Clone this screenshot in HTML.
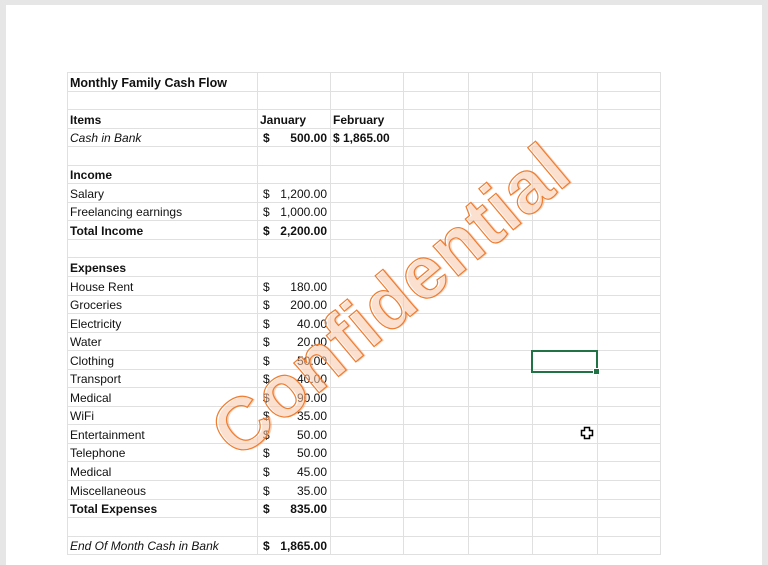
<!DOCTYPE html>
<html><head><meta charset="utf-8"><style>
html,body{margin:0;padding:0;}
body{width:768px;height:556px;background:#e6e6e6;position:relative;overflow:hidden;font-family:"Liberation Sans",Arial,sans-serif;}
.page{position:absolute;left:6px;top:5px;width:756px;height:560px;background:#fff;}
table{position:absolute;left:67px;top:72px;border-collapse:collapse;table-layout:fixed;font-size:12px;color:#111;}
td{border:1px solid #e0e0e0;height:16.55px;padding:1px 2px 0 2px;white-space:nowrap;overflow:hidden;line-height:16px;vertical-align:bottom;}
.b{font-weight:bold}.i{font-style:italic}
.d span{float:left;}
.d{text-align:right;padding-right:3px;padding-left:5px;}
.sel{position:absolute;left:531px;top:350px;width:63px;height:19px;border:2px solid #217346;}
.sel:after{content:"";position:absolute;right:-4px;bottom:-4px;width:5px;height:5px;background:#217346;border:1px solid #fff;}
.wm{position:absolute;left:390px;top:300px;transform:translate(-50%,-50%) rotate(-40deg);font-size:74px;font-weight:bold;color:rgba(255,255,255,0.3);-webkit-text-stroke:1.2px #ee7d31;white-space:nowrap;letter-spacing:1px;text-shadow:1.5px 1.5px 0 rgba(240,130,60,0.35);}
.cur{position:absolute;left:580px;top:426px;}
</style></head><body>
<div class="page"></div>
<table>
<colgroup><col style="width:190px"><col style="width:73px"><col style="width:73px"><col style="width:65px"><col style="width:64px"><col style="width:65px"><col style="width:63px"></colgroup>
<tr><td class="b" style="font-size:12.5px">Monthly Family Cash Flow</td><td></td><td></td><td></td><td></td><td></td><td></td></tr>
<tr><td></td><td></td><td></td><td></td><td></td><td></td><td></td></tr>
<tr><td class="b">Items</td><td class="b">January</td><td class="b">February</td><td></td><td></td><td></td><td></td></tr>
<tr><td class="i">Cash in Bank</td><td class="d b"><span>$</span>500.00</td><td class="b">$ 1,865.00</td><td></td><td></td><td></td><td></td></tr>
<tr><td></td><td></td><td></td><td></td><td></td><td></td><td></td></tr>
<tr><td class="b">Income</td><td></td><td></td><td></td><td></td><td></td><td></td></tr>
<tr><td>Salary</td><td class="d"><span>$</span>1,200.00</td><td></td><td></td><td></td><td></td><td></td></tr>
<tr><td>Freelancing earnings</td><td class="d"><span>$</span>1,000.00</td><td></td><td></td><td></td><td></td><td></td></tr>
<tr><td class="b">Total Income</td><td class="d b"><span>$</span>2,200.00</td><td></td><td></td><td></td><td></td><td></td></tr>
<tr><td></td><td></td><td></td><td></td><td></td><td></td><td></td></tr>
<tr><td class="b">Expenses</td><td></td><td></td><td></td><td></td><td></td><td></td></tr>
<tr><td>House Rent</td><td class="d"><span>$</span>180.00</td><td></td><td></td><td></td><td></td><td></td></tr>
<tr><td>Groceries</td><td class="d"><span>$</span>200.00</td><td></td><td></td><td></td><td></td><td></td></tr>
<tr><td>Electricity</td><td class="d"><span>$</span>40.00</td><td></td><td></td><td></td><td></td><td></td></tr>
<tr><td>Water</td><td class="d"><span>$</span>20.00</td><td></td><td></td><td></td><td></td><td></td></tr>
<tr><td>Clothing</td><td class="d"><span>$</span>50.00</td><td></td><td></td><td></td><td></td><td></td></tr>
<tr><td>Transport</td><td class="d"><span>$</span>40.00</td><td></td><td></td><td></td><td></td><td></td></tr>
<tr><td>Medical</td><td class="d"><span>$</span>90.00</td><td></td><td></td><td></td><td></td><td></td></tr>
<tr><td>WiFi</td><td class="d"><span>$</span>35.00</td><td></td><td></td><td></td><td></td><td></td></tr>
<tr><td>Entertainment</td><td class="d"><span>$</span>50.00</td><td></td><td></td><td></td><td></td><td></td></tr>
<tr><td>Telephone</td><td class="d"><span>$</span>50.00</td><td></td><td></td><td></td><td></td><td></td></tr>
<tr><td>Medical</td><td class="d"><span>$</span>45.00</td><td></td><td></td><td></td><td></td><td></td></tr>
<tr><td>Miscellaneous</td><td class="d"><span>$</span>35.00</td><td></td><td></td><td></td><td></td><td></td></tr>
<tr><td class="b">Total Expenses</td><td class="d b"><span>$</span>835.00</td><td></td><td></td><td></td><td></td><td></td></tr>
<tr><td></td><td></td><td></td><td></td><td></td><td></td><td></td></tr>
<tr><td class="i">End Of Month Cash in Bank</td><td class="d b"><span>$</span>1,865.00</td><td></td><td></td><td></td><td></td><td></td></tr>
</table>
<div class="sel"></div>
<svg class="cur" width="14" height="14" viewBox="0 0 14 14"><path d="M4.5 1.5h5v3h3v5h-3v3h-5v-3h-3v-5h3z" fill="#fff" stroke="#000" stroke-width="1.5"/></svg>
<div class="wm">Confidential</div>
</body></html>
